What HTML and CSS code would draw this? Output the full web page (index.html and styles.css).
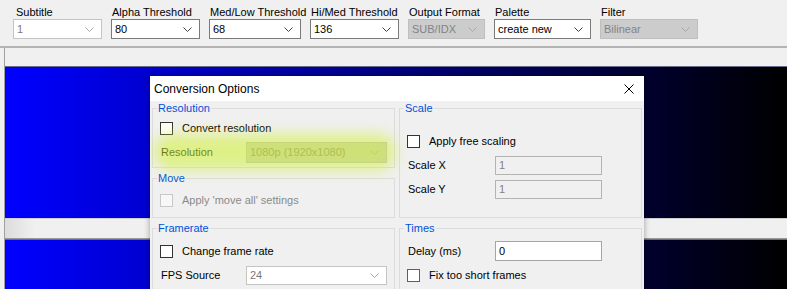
FILE: index.html
```html
<!DOCTYPE html>
<html lang="en">
<head>
    <meta charset="UTF-8">
    <meta name="viewport" content="width=device-width, initial-scale=1.0">
    <title>Conversion Options</title>
    <link rel="stylesheet" href="styles.css">
</head>
<body>
    <div class="toolbar">
        <div class="field w-subtitle">
            <div class="field-label">Subtitle</div>
            <div class="combo combo-dim"><span>1</span><svg class="chev" width="9" height="5"><polyline points="0.5,0.5 4.5,4.5 8.5,0.5"/></svg></div>
        </div>
        <div class="field w-alpha">
            <div class="field-label">Alpha Threshold</div>
            <div class="combo"><span>80</span><svg class="chev" width="9" height="5"><polyline points="0.5,0.5 4.5,4.5 8.5,0.5"/></svg></div>
        </div>
        <div class="field w-medlow">
            <div class="field-label">Med/Low Threshold</div>
            <div class="combo"><span>68</span><svg class="chev" width="9" height="5"><polyline points="0.5,0.5 4.5,4.5 8.5,0.5"/></svg></div>
        </div>
        <div class="field w-himed">
            <div class="field-label">Hi/Med Threshold</div>
            <div class="combo"><span>136</span><svg class="chev" width="9" height="5"><polyline points="0.5,0.5 4.5,4.5 8.5,0.5"/></svg></div>
        </div>
        <div class="field w-format">
            <div class="field-label">Output Format</div>
            <div class="combo combo-off"><span>SUB/IDX</span><svg class="chev" width="9" height="5"><polyline points="0.5,0.5 4.5,4.5 8.5,0.5"/></svg></div>
        </div>
        <div class="field w-palette">
            <div class="field-label">Palette</div>
            <div class="combo"><span>create new</span><svg class="chev" width="9" height="5"><polyline points="0.5,0.5 4.5,4.5 8.5,0.5"/></svg></div>
        </div>
        <div class="field w-filter">
            <div class="field-label">Filter</div>
            <div class="combo combo-off"><span>Bilinear</span><svg class="chev" width="9" height="5"><polyline points="0.5,0.5 4.5,4.5 8.5,0.5"/></svg></div>
        </div>
    </div>

    <div class="workspace">
        <div class="preview"></div>
        <div class="strip"></div>
        <div class="preview preview-last"></div>
    </div>

    <!-- dialog window floating over the preview -->
    <div class="dialog">
        <div class="dialog-title">
            <span>Conversion Options</span>
            <svg class="close" width="10" height="10"><line x1="0.5" y1="0.5" x2="9.5" y2="9.5"/><line x1="9.5" y1="0.5" x2="0.5" y2="9.5"/></svg>
        </div>
        <div class="dialog-body">
            <div class="col">
                <fieldset class="group g-resolution">
                    <legend>Resolution</legend>
                    <div class="rows">
                        <div class="row"><span class="check"></span><span class="check-text">Convert resolution</span></div>
                        <div class="row glow">
                            <span class="row-label left-label">Resolution</span>
                            <div class="combo combo-off combo-wide res-combo"><span>1080p (1920x1080)</span><svg class="chev" width="9" height="5"><polyline points="0.5,0.5 4.5,4.5 8.5,0.5"/></svg></div>
                        </div>
                    </div>
                </fieldset>
                <fieldset class="group g-move">
                    <legend>Move</legend>
                    <div class="rows rows-move">
                        <div class="row"><span class="check check-off"></span><span class="check-text text-off">Apply 'move all' settings</span></div>
                    </div>
                </fieldset>
                <fieldset class="group g-framerate">
                    <legend>Framerate</legend>
                    <div class="rows rows-low">
                        <div class="row"><span class="check"></span><span class="check-text">Change frame rate</span></div>
                        <div class="row">
                            <span class="row-label left-label">FPS Source</span>
                            <div class="combo combo-dim combo-wide fps-combo"><span>24</span><svg class="chev" width="9" height="5"><polyline points="0.5,0.5 4.5,4.5 8.5,0.5"/></svg></div>
                        </div>
                    </div>
                </fieldset>
            </div>
            <div class="col">
                <fieldset class="group g-scale">
                    <legend>Scale</legend>
                    <div class="rows rows-scale">
                        <div class="row"><span class="check"></span><span class="check-text">Apply free scaling</span></div>
                        <div class="row"><span class="row-label right-label">Scale X</span><div class="textbox textbox-off">1</div></div>
                        <div class="row"><span class="row-label right-label">Scale Y</span><div class="textbox textbox-off">1</div></div>
                    </div>
                </fieldset>
                <fieldset class="group g-times">
                    <legend>Times</legend>
                    <div class="rows rows-low">
                        <div class="row"><span class="row-label right-label">Delay (ms)</span><div class="textbox">0</div></div>
                        <div class="row"><span class="check check-focus"></span><span class="check-text">Fix too short frames</span></div>
                    </div>
                </fieldset>
            </div>
        </div>
    </div>
</body>
</html>
```
FILE: styles.css
```css
body {
    margin: 0;
    width: 787px;
    height: 289px;
    overflow: hidden;
    background-color: #f0f0f0;
    font-family: "Liberation Sans", Arial, sans-serif;
    font-size: 11px;
    color: #000;
    position: relative;
}

/* top toolbar */
.toolbar {
    display: flex;
    gap: 9px;
    height: 41px;
    padding: 5px 0 0 13px;
    border-bottom: 2px solid #b4b4b4;
}

.field-label {
    height: 14px;
    line-height: 14px;
    padding-left: 1px;
    white-space: nowrap;
}

.w-subtitle { width: 89px; }
.w-subtitle .field-label { padding-left: 3px; }
.w-alpha { width: 89px; }
.w-medlow { width: 92px; }
.w-himed { width: 89px; }
.w-format { width: 77px; }
.w-palette { width: 97px; }
.w-filter { width: 98px; }

.combo {
    box-sizing: border-box;
    height: 20px;
    display: flex;
    align-items: center;
    justify-content: space-between;
    padding: 0 7px 0 3px;
    background-color: #fff;
    border: 1px solid #7a7a7a;
    white-space: nowrap;
}

.chev polyline {
    fill: none;
    stroke: #444;
    stroke-width: 1;
}

.combo-dim {
    border-color: #c4c4c4;
    color: #7a7a7a;
}

.combo-dim .chev polyline,
.combo-off .chev polyline {
    stroke: #a8a8a8;
}

.combo-off {
    background-color: #cccccc;
    border-color: #bfbfbf;
    color: #838383;
}

/* preview area under the toolbar */
.workspace {
    margin-left: 4px;
    padding-top: 18px;
    border-left: 1px solid #a0a0a0;
    height: 223px;
    display: flex;
    flex-direction: column;
}

.preview {
    height: 151px;
    border-top: 1px solid #6a6a8a;
    background: linear-gradient(to right, #0000ff, #000000);
}

.preview-last {
    height: auto;
    flex: 1;
}

.strip {
    height: 19px;
    border-top: 1px solid #d0d0d0;
    border-bottom: 1px solid #9a9a9a;
    background: linear-gradient(to right, #dcdcdc, #f0f0f0 30px);
}

/* dialog window */
.dialog {
    position: absolute;
    left: 150px;
    top: 76px;
    width: 494px;
    height: 213px;
    overflow: hidden;
    background-color: #f0f0f0;
    box-shadow: 0 0 6px rgba(0, 0, 0, 0.35);
}

.dialog-title {
    height: 25px;
    background-color: #fff;
    display: flex;
    align-items: center;
    justify-content: space-between;
    padding: 0 10px 0 4px;
    font-size: 12px;
}

.close line {
    stroke: #000;
    stroke-width: 1;
}

.dialog-body {
    display: grid;
    grid-template-columns: 243px 243px;
    column-gap: 4px;
    padding: 0 2px;
}

.col {
    display: flex;
    flex-direction: column;
    gap: 3px;
}

.group {
    box-sizing: border-box;
    margin: 0;
    padding: 0 7px;
    min-width: 0;
    border: 1px solid #dcdcdc;
}

.group legend {
    padding: 0 1px;
    margin-left: -3px;
    line-height: 14px;
    color: #0050d8;
}

.g-resolution { height: 67px; }
.g-move { height: 47px; }
.g-framerate { height: 80px; }
.g-scale { height: 117px; }
.g-times { height: 80px; }

.rows { padding-top: 1px; }
.rows-move { padding-top: 3px; }
.rows-low { padding-top: 4px; }
.rows-scale { padding-top: 14px; }

.row {
    height: 24px;
    display: flex;
    align-items: center;
}

.check {
    box-sizing: border-box;
    width: 13px;
    height: 13px;
    border: 1px solid #333;
    background-color: #fff;
    flex-shrink: 0;
}

.check-off {
    border-color: #c8c8c8;
    background-color: #f7f7f7;
}

.check-focus {
    border-color: #0078d7;
}

.check-text {
    margin-left: 9px;
}

.text-off {
    color: #8a8a8a;
}

.row-label {
    flex-shrink: 0;
    padding-left: 1px;
}

.left-label { width: 85px; }
.right-label { width: 87px; }

.combo-wide {
    width: 142px;
}

.res-combo { height: 21px; }
.fps-combo { height: 19px; }

.textbox {
    box-sizing: border-box;
    width: 107px;
    height: 20px;
    line-height: 18px;
    padding-left: 3px;
    background-color: #fff;
    border: 1px solid #a5a5a5;
}

.textbox-off {
    height: 19px;
    line-height: 17px;
    background-color: #f0f0f0;
    border-color: #b4b4b4;
    color: #838383;
}

/* yellow highlight around the resolution row */
.glow {
    position: relative;
}

.glow::after {
    content: "";
    position: absolute;
    left: -6px;
    right: -8px;
    top: -6px;
    bottom: -6px;
    border-radius: 16px;
    background: rgba(208, 240, 50, 0.55);
    filter: blur(7px);
    pointer-events: none;
}
```
